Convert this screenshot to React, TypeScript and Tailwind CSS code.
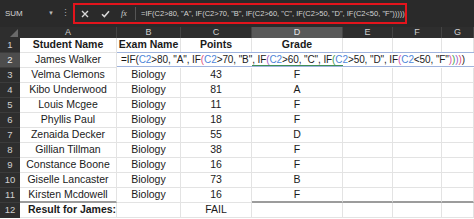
import React from 'react';

const cols = ['A', 'B', 'C', 'D', 'E', 'F', 'G'];

const rows = [
  ['Velma Clemons', 'Biology', '43', 'F'],
  ['Kibo Underwood', 'Biology', '81', 'A'],
  ['Louis Mcgee', 'Biology', '11', 'F'],
  ['Phyllis Paul', 'Biology', '18', 'F'],
  ['Zenaida Decker', 'Biology', '55', 'D'],
  ['Gillian Tillman', 'Biology', '38', 'F'],
  ['Constance Boone', 'Biology', '16', 'F'],
  ['Giselle Lancaster', 'Biology', '73', 'B'],
  ['Kirsten Mcdowell', 'Biology', '16', 'F'],
];

const formula = '=IF(C2>80, "A", IF(C2>70, "B", IF(C2>60, "C", IF(C2>50, "D", IF(C2<50, "F")))))';

function ColoredFormula() {
  // paren colours by nesting level, like Excel's in-cell editor
  const parens = ['text-[#222]', 'text-[#e0507a]', 'text-[#a05cc8]', 'text-[#3f9c4f]', 'text-[#d64fa6]'];
  const parts: React.ReactNode[] = [];
  let level = 0;
  let buf = '';
  let key = 0;
  const flush = () => {
    if (buf) parts.push(<span key={key++}>{buf}</span>);
    buf = '';
  };
  for (let i = 0; i < formula.length; i++) {
    const ch = formula[i];
    if (ch === '(') {
      flush();
      parts.push(<span key={key++} className={parens[level]}>(</span>);
      level++;
    } else if (ch === ')') {
      flush();
      level--;
      parts.push(<span key={key++} className={parens[level]}>)</span>);
    } else if (ch === 'C' && formula[i + 1] === '2') {
      flush();
      parts.push(<span key={key++} className="text-[#4f86d9]">C2</span>);
      i++;
    } else {
      buf += ch;
    }
  }
  flush();
  return <>{parts}</>;
}

const cell = 'h-[15px] border-r border-b border-[#e3e3e3] flex items-center justify-center whitespace-nowrap overflow-hidden';
const rowNum = 'h-[15px] text-[9.5px] flex items-center justify-center border-b border-[#3c3c3c]';

export default function App() {
  return (
    <div className="w-[474px] h-[219px] overflow-hidden bg-white font-['Liberation_Sans',sans-serif]">
      {/* formula bar */}
      <div className="h-[27px] bg-[#2a2a2a] flex items-center text-[#d4d4d4]">
        <div className="w-[58px] h-full flex items-center justify-between pl-[5px] pr-[4px] text-[8px]">
          <span>SUM</span>
          <span className="text-[6px] text-[#bbb]">▼</span>
        </div>
        <div className="w-[15px] flex justify-center text-[9px] text-[#aaa]">⋮</div>
        <div className="w-[334px] h-[21px] border-2 border-[#e3141c] flex items-center">
          <div className="w-[20px] flex justify-center">
            <svg width="8" height="8" viewBox="0 0 8 8" stroke="#d8d8d8" strokeWidth="1.4">
              <path d="M1 1l6 6M7 1l-6 6" />
            </svg>
          </div>
          <div className="w-[20px] flex justify-center">
            <svg width="9" height="8" viewBox="0 0 9 8" fill="none" stroke="#d8d8d8" strokeWidth="1.5">
              <path d="M1 4.2l2.4 2.4L8 1.2" />
            </svg>
          </div>
          <div className="w-[18px] flex justify-center italic text-[8px] font-['Liberation_Serif',serif]">fx</div>
          <div className="w-px h-[13px] bg-[#555] ml-[2px]" />
          <div className="pl-[5px] text-[7.5px] whitespace-nowrap">{formula}</div>
        </div>
      </div>

      <div className="grid grid-cols-[20px_97px_64px_71px_91px_50px_49px_32px] text-[10.5px] text-[#1a1a1a]">
        {/* column headers */}
        <div className="h-[11px] bg-[#2e2e2e] flex items-end justify-end pr-[2px] pb-[1px]">
          <div className="w-0 h-0 border-l-[8px] border-l-transparent border-b-[8px] border-b-[#6a6a6a]" />
        </div>
        {cols.map((c) => (
          <div
            key={c}
            className={`h-[11px] flex items-center justify-center text-[9px] border-r border-[#444] ${
              c === 'D' ? 'bg-[#595959] text-[#e6e6e6]' : 'bg-[#2e2e2e] text-[#cfcfcf]'
            }`}
          >
            {c}
          </div>
        ))}

        {/* row 1 */}
        <div className={`${rowNum} bg-[#2e2e2e] text-[#d0d0d0]`}>1</div>
        <div className={`${cell} font-bold`}>Student Name</div>
        <div className={`${cell} font-bold`}>Exam Name</div>
        <div className={`${cell} font-bold`}>Points</div>
        <div className={`${cell} font-bold`}>Grade</div>
        <div className={cell} />
        <div className={cell} />
        <div className={cell} />

        {/* row 2, in-cell editing */}
        <div className={`${rowNum} bg-[#4d4d4d] text-[#e6e6e6]`}>2</div>
        <div className={cell}>James Walker</div>
        <div className="col-span-6 h-[15px] relative flex items-center border-t border-b border-[#9fb3dd] -mt-px whitespace-nowrap overflow-hidden pl-[4px] text-[10px] tracking-[-0.1px]">
          <ColoredFormula />
          <div className="absolute left-[135px] w-[91px] bottom-[-1px] h-[2px] bg-[#3f8f55]" />
        </div>

        {rows.map((r, i) => {
          const last = i === 8 ? 'border-b-2 border-b-[#9c9c9c]' : '';
          return (
            <React.Fragment key={i}>
              <div className={`${rowNum} bg-[#2e2e2e] text-[#d0d0d0]`}>{i + 3}</div>
              <div className={`${cell} ${last}`}>{r[0]}</div>
              <div className={cell}>{r[1]}</div>
              <div className={cell}>{r[2]}</div>
              <div className={`${cell} ${last}`}>{r[3]}</div>
              <div className={`${cell} ${last}`} />
              <div className={`${cell} ${last}`} />
              <div className={`${cell} ${last}`} />
            </React.Fragment>
          );
        })}

        {/* row 12 */}
        <div className={`${rowNum} bg-[#2e2e2e] text-[#d0d0d0] border-b-0`}>12</div>
        <div className={`${cell} justify-start pl-[8px] font-bold`}>Result for James:</div>
        <div className={cell} />
        <div className={cell}>FAIL</div>
        <div className={cell} />
        <div className={cell} />
        <div className={cell} />
        <div className={cell} />
      </div>
    </div>
  );
}
